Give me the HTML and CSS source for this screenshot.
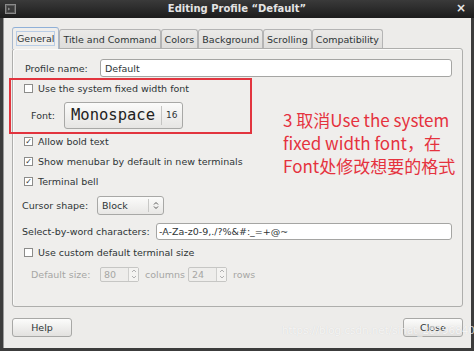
FILE: index.html
```html
<!DOCTYPE html>
<html>
<head>
<meta charset="utf-8">
<link rel="stylesheet" href="styles.css">
</head>
<body>
<div class="titlebar">
  <svg class="wicon" width="11" height="10" viewBox="0 0 11 10"><rect x="0.5" y="0.5" width="10" height="9" fill="#5a5a5a" stroke="#8a8a8a"/><rect x="2" y="2" width="7" height="6" fill="#3a3a3a"/><path d="M3 4l1.5 1L3 6" stroke="#9a9a9a" fill="none"/></svg>
  <span class="title">Editing Profile “Default”</span>
  <span class="xclose">×</span>
</div>
<div class="dialog">
  <div class="tabs">
    <div class="tab active"><span class="focus">General</span></div>
    <div class="tab">Title and Command</div>
    <div class="tab">Colors</div>
    <div class="tab">Background</div>
    <div class="tab">Scrolling</div>
    <div class="tab">Compatibility</div>
  </div>
  <div class="panel">
    <div class="row r-profile"><span class="lbl l-profile">Profile name:</span><div class="entry e-profile">Default</div></div>
    <div class="row r-check r-sys"><span class="cb"></span><span>Use the system fixed width font</span></div>
    <div class="row r-font"><span class="lbl l-font">Font:</span><div class="fontbtn"><span class="mono">Monospace</span><span class="sep"></span><span class="fsize">16</span></div></div>
    <div class="row r-check r-20"><span class="cb on">✓</span><span>Allow bold text</span></div>
    <div class="row r-check r-20"><span class="cb on">✓</span><span>Show menubar by default in new terminals</span></div>
    <div class="row r-check r-20"><span class="cb on">✓</span><span>Terminal bell</span></div>
    <div class="row r-cursor"><span class="lbl l-cursor">Cursor shape:</span><div class="combo"><span class="ctext">Block</span><span class="csep"></span><svg class="carrows" width="6" height="9" viewBox="0 0 6 9"><path d="M1 3.5L3 1.5L5 3.5M1 5.5L3 7.5L5 5.5" stroke="#555" fill="none" stroke-width="1"/></svg></div></div>
    <div class="row r-select"><span class="lbl l-select">Select-by-word characters:</span><div class="entry e-select">-A-Za-z0-9,./?%&amp;#:_=+@~</div></div>
    <div class="row r-check r-custom"><span class="cb"></span><span>Use custom default terminal size</span></div>
    <div class="row r-default"><span class="lbl l-default dis">Default size:</span><div class="spin"><span class="stext">80</span><span class="sbtns"><svg width="6" height="12" viewBox="0 0 6 12"><path d="M1 4L3 2L5 4M1 8L3 10L5 8" stroke="#b0b0b0" fill="none"/></svg></span></div><span class="dis unit u-cols">columns</span><div class="spin"><span class="stext">24</span><span class="sbtns"><svg width="6" height="12" viewBox="0 0 6 12"><path d="M1 4L3 2L5 4M1 8L3 10L5 8" stroke="#b0b0b0" fill="none"/></svg></span></div><span class="dis unit">rows</span></div>
    <div class="redbox"></div>
    <div class="note">3 取消Use the system<br>fixed width font，在<br>Font处修改想要的格式</div>
  </div>
  <div class="buttons">
    <div class="btn">Help</div>
    <div class="btn">Close</div>
  </div>
  <div class="watermark">https://blog.csdn.net/sinat_28796840</div>
</div>
</body>
</html>
```
FILE: styles.css
```css
html, body {
  margin: 0;
  padding: 0;
}
body {
  width: 474px;
  height: 351px;
  overflow: hidden;
  background: #3c3c3c;
  font-family: "DejaVu Sans", sans-serif;
  font-size: 9.5px;
  color: #2e3436;
}
.titlebar {
  height: 18px;
  background: linear-gradient(#3a3a3a, #1c1c1c);
  display: flex;
  align-items: center;
  position: relative;
}
.wicon {
  margin-left: 5px;
}
.title {
  position: absolute;
  left: 0;
  right: 0;
  top: 0;
  line-height: 17px;
  text-align: center;
  font-weight: bold;
  font-size: 10px;
  color: #e4e4e4;
}
.xclose {
  position: absolute;
  right: 8px;
  top: 0;
  line-height: 17px;
  font-weight: bold;
  font-size: 12px;
  color: #e8e8e8;
}
.dialog {
  position: relative;
  width: 468px;
  margin: 0 3px;
  height: 330px;
  box-sizing: border-box;
  padding: 9px 0 0 8px;
  background: #edecea;
  border-left: 1px solid #9a9a9a;
}
.tabs {
  display: flex;
  align-items: flex-end;
  height: 21px;
}
.tab {
  height: 19px;
  box-sizing: border-box;
  padding: 0 3px;
  border: 1px solid #b4b4b4;
  border-bottom: none;
  border-radius: 3px 3px 0 0;
  background: linear-gradient(#ebeae8, #dedddb);
  display: flex;
  align-items: center;
  color: #2e3436;
}
.tab.active {
  height: 22px;
  margin-bottom: -1px;
  position: relative;
  z-index: 1;
  padding: 0 3px;
  background: #efeeec;
  border-color: #a9b8cc;
  border-top-color: #8fb0d8;
}
.focus {
  border: 1px solid #b9cde6;
  padding: 1px 0;
  line-height: 11px;
}
.panel {
  position: relative;
  width: 451px;
  height: 259px;
  box-sizing: border-box;
  border: 1px solid #aeaeac;
  border-radius: 3px;
  background: #efeeec;
  box-shadow: inset 1px 1px 0 #fafaf9;
  padding-top: 10px;
}
.row {
  display: flex;
  align-items: center;
  white-space: nowrap;
}
.lbl {
  flex: none;
}
.r-profile { height: 18px; padding-left: 12px; }
.l-profile { width: 75px; }
.entry {
  flex: none;
  box-sizing: border-box;
  background: #fff;
  border: 1px solid #a5a5a3;
  border-radius: 3px;
  padding-left: 4px;
  display: flex;
  align-items: center;
  color: #2e3436;
}
.e-profile { width: 352px; height: 18px; }
.r-check { padding-left: 11px; }
.r-sys { height: 22px; }
.r-20 { height: 20px; }
.r-custom { height: 18px; }
.cb {
  flex: none;
  width: 9px;
  height: 9px;
  box-sizing: border-box;
  border: 1px solid #8c8c8a;
  background: #fff;
  margin-right: 5px;
  font-size: 8px;
  line-height: 7px;
  text-align: center;
  color: #333;
}
.r-font { height: 32px; padding-left: 18px; }
.l-font { width: 33px; }
.fontbtn {
  width: 119px;
  height: 27px;
  box-sizing: border-box;
  border: 1px solid #a8a8a6;
  border-radius: 3px;
  background: linear-gradient(#fbfbfa, #e6e5e3);
  display: flex;
  align-items: center;
  padding-left: 6px;
}
.mono {
  font-family: "DejaVu Sans Mono", monospace;
  font-size: 15.5px;
  color: #222;
  width: 90px;
}
.sep {
  width: 1px;
  height: 19px;
  background: #c4c4c2;
  margin-right: 4px;
}
.fsize {
  font-size: 9px;
}
.r-cursor { height: 28px; padding-left: 9px; }
.l-cursor { width: 75px; }
.combo {
  width: 67px;
  height: 19px;
  box-sizing: border-box;
  border: 1px solid #a8a8a6;
  border-radius: 3px;
  background: linear-gradient(#fbfbfa, #e8e7e5);
  display: flex;
  align-items: center;
  padding-left: 4px;
}
.ctext { width: 46px; }
.csep { width: 1px; height: 13px; background: #c8c8c6; margin-right: 4px; }
.r-select { height: 24px; padding-left: 9px; }
.l-select { width: 134px; }
.e-select { width: 296px; height: 17px; padding-left: 2px; }
.r-default { height: 26px; padding-left: 18px; }
.l-default { width: 69px; }
.dis { color: #a6a6a4; }
.spin {
  width: 39px;
  height: 15px;
  box-sizing: border-box;
  border: 1px solid #c6c6c4;
  border-radius: 2px;
  background: #eeedeb;
  display: flex;
  align-items: center;
  color: #a6a6a4;
}
.stext { width: 28px; padding-left: 3px; box-sizing: border-box; }
.sbtns {
  width: 9px;
  height: 13px;
  border-left: 1px solid #cfcfcd;
  display: flex;
  justify-content: center;
  align-items: center;
  background: #f4f3f1;
}
.unit { margin-left: 6px; }
.u-cols { width: 43px; }
.redbox {
  position: absolute;
  left: -4px;
  top: 29px;
  width: 243px;
  height: 56px;
  box-sizing: border-box;
  border: 2px solid #e2343e;
}
.note {
  position: absolute;
  left: 270px;
  top: 59px;
  font-family: "Noto Sans CJK SC", "Noto Sans", sans-serif;
  font-size: 17px;
  line-height: 23px;
  color: #e5323e;
  white-space: nowrap;
}
.buttons {
  width: 451px;
  display: flex;
  justify-content: space-between;
  margin-top: 11px;
}
.btn {
  width: 60px;
  height: 19px;
  box-sizing: border-box;
  border: 1px solid #a8a8a6;
  border-radius: 3px;
  background: linear-gradient(#fcfcfb, #e2e1df);
  display: flex;
  align-items: center;
  justify-content: center;
}
.watermark {
  position: absolute;
  left: 278px;
  top: 306px;
  font-family: "DejaVu Sans", sans-serif;
  font-size: 10.3px;
  color: rgba(255, 255, 255, 0.75);
  text-shadow: 0 0 1px rgba(0, 0, 0, 0.12);
  white-space: nowrap;
}
```
